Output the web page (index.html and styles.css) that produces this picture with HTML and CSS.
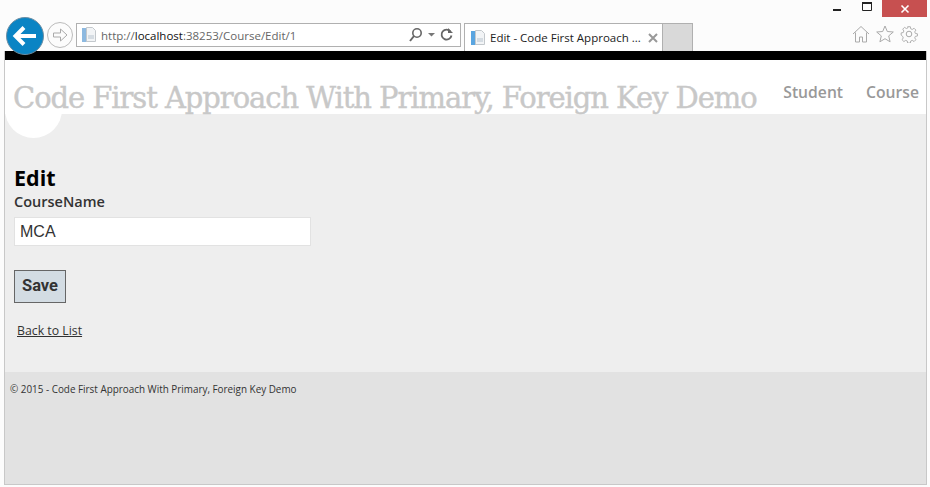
FILE: index.html
```html
<!DOCTYPE html>
<html lang="en">
<head>
<meta charset="utf-8">
<title>Edit - Code First Approach With Primary, Foreign Key Demo</title>
<link rel="stylesheet" href="styles.css">
</head>
<body>
<div class="chrome">
  <div class="caption">
    <span class="cap-btn"><svg width="10" height="10" viewBox="0 0 10 10"><rect x="1" y="7" width="8" height="2" fill="#222"/></svg></span>
    <span class="cap-btn"><svg width="10" height="10" viewBox="0 0 10 10"><path d="M.5 1.5h9v7h-9z" fill="none" stroke="#222"/><rect x="0" y="0" width="10" height="2" fill="#222"/></svg></span>
    <span class="cap-close"><svg width="10" height="10" viewBox="0 0 10 10"><path d="M1.5 1.5l7 7M8.5 1.5l-7 7" stroke="#fff" stroke-width="1.6"/></svg></span>
  </div>
  <div class="toolbar">
    <svg class="back" width="38" height="38" viewBox="0 0 38 38"><circle cx="19" cy="19" r="18.5" fill="#0a84c4" stroke="#6d8ea3"/><path d="M30 19H10M18 10.500l-8.500 8.500 8.500 8.500" fill="none" stroke="#fff" stroke-width="4"/></svg>
    <svg class="forward" width="26" height="26" viewBox="0 0 26 26"><circle cx="13" cy="13" r="12.500" fill="none" stroke="#bbb"/><path d="M6.500 11h7V7l6.500 6-6.500 6v-4h-7z" fill="none" stroke="#aaa"/></svg>
    <div class="address">
      <svg class="page-ico" width="16" height="16" viewBox="0 0 16 16"><rect x="1" y="1" width="5" height="14" fill="#8db9e0"/><path d="M5.500 .5h6l3 3v11h-9z" fill="#f2f4f6" stroke="#c3c8cc"/><path d="M7 9h6M7 11h6" stroke="#b8c4cf"/></svg>
      <span class="url">http://<b class="host">localhost</b>:38253/Course/Edit/1</span>
      <svg class="addr-tools" width="46" height="16" viewBox="0 0 46 16"><circle cx="8" cy="6" r="4.200" fill="none" stroke="#666" stroke-width="1.600"/><path d="M5 9l-4 5" stroke="#666" stroke-width="2"/><path d="M19 6h7l-3.500 3.500z" fill="#777"/><path d="M41.500 4.500a5 5 0 1 0 1 4" fill="none" stroke="#666" stroke-width="1.800"/><path d="M39 1v5h5z" fill="#666"/></svg>
    </div>
    <div class="tab">
      <svg class="page-ico" width="16" height="16" viewBox="0 0 16 16"><rect x="1" y="1" width="5" height="14" fill="#5aa5e0"/><path d="M5.500 .5h6l3 3v11h-9z" fill="#f2f4f6" stroke="#c3c8cc"/><path d="M7 9h6M7 11h6" stroke="#b8c4cf"/></svg>
      <span class="tab-title">Edit - Code First Approach ...</span>
      <svg class="tab-close" width="10" height="10" viewBox="0 0 10 10"><path d="M1 1l8 8M9 1l-8 8" stroke="#999" stroke-width="2"/></svg>
    </div>
    <div class="new-tab"></div>
    <div class="tools">
      <svg width="18" height="18" viewBox="0 0 18 18"><path d="M1 9l8-7.500L17 9M3.500 7.500V17h4v-5h3v5h4V7.500" fill="none" stroke="#aaa"/></svg>
      <svg width="18" height="18" viewBox="0 0 18 18"><path d="M9 1l2.300 5.500 6 .5-4.600 3.900 1.400 5.900L9 13.700l-5.100 3.100 1.400-5.900L.7 7l6-.5z" fill="none" stroke="#aaa"/></svg>
      <svg width="18" height="18" viewBox="0 0 18 18"><circle cx="9" cy="9" r="2.800" fill="none" stroke="#aaa"/><path d="M7.500 1h3l.4 2.300 1.700.7 2-1.300 2 2-1.300 2 .7 1.700 2.300.4v2.400l-2.300.4-.7 1.700 1.300 2-2 2-2-1.300-1.700.7-.4 2.300h-3l-.4-2.300-1.700-.7-2 1.300-2-2 1.300-2-.7-1.700L.4 10.200V7.800l2.300-.4.7-1.700-1.300-2 2-2 2 1.300 1.700-.7z" fill="none" stroke="#aaa" transform="translate(.8 .8) scale(.91)"/></svg>
    </div>
  </div>
</div>
<div class="page">
  <div class="topbar"></div>
  <header class="site-header">
    <div class="logo-disc"></div>
    <p class="site-title">Code First Approach With Primary, Foreign Key Demo</p>
    <nav class="site-nav"><a>Student</a><a>Course</a></nav>
  </header>
  <main class="content">
    <h2 class="heading">Edit</h2>
    <label class="field-label">CourseName</label>
    <input class="field-input" type="text" value="MCA">
    <button class="save">Save</button>
    <a class="back-link">Back to List</a>
  </main>
  <footer class="site-footer">© 2015 - Code First Approach With Primary, Foreign Key Demo</footer>
</div>
</body>
</html>
```
FILE: styles.css
```css
html, body { margin: 0; height: 100%; }
body {
  width: 930px; height: 487px; overflow: hidden;
  background: #fcfcfc;
  font-family: "Open Sans", "Noto Sans", sans-serif;
  display: flex; flex-direction: column;
}
.chrome { height: 51px; flex: none; position: relative; }
.caption { height: 17px; display: flex; justify-content: flex-end; padding-right: 3px; }
.cap-btn { width: 30px; display: flex; align-items: center; justify-content: center; height: 14px; }
.cap-close { width: 45px; height: 17px; background: #c75050; display: flex; align-items: center; justify-content: center; }
.toolbar { display: flex; align-items: flex-start; height: 34px; padding-left: 6px; }
.back { flex: none; }
.forward { margin: 5px 0 0 3px; flex: none; }
.address {
  width: 379px; height: 22px; margin: 6px 0 0 3px; flex: none;
  border: 1px solid #b0b0b0; background: #fff;
  display: flex; align-items: center; padding-left: 4px; box-sizing: content-box;
}
.page-ico { flex: none; }
.url { font-size: 11.500px; color: #666; margin-left: 4px; flex: 1; white-space: nowrap; }
.host { color: #111; font-weight: 400; }
.addr-tools { margin-right: 5px; flex: none; }
.tab {
  width: 199px; height: 28px; margin: 6px 0 0 3px; flex: none; box-sizing: border-box;
  border: 1px solid #b0b0b0; border-bottom: 0; background: #fff;
  display: flex; align-items: center; padding-left: 5px;
}
.tab-title { font-size: 11.500px; color: #222; margin-left: 4px; white-space: nowrap; flex: 1; }
.tab-close { margin-right: 4px; flex: none; }
.new-tab { width: 30px; height: 28px; margin-top: 6px; background: #d9d9d9; border: 1px solid #b0b0b0; border-width: 1px 1px 0 0; box-sizing: border-box; flex: none; }
.tools { margin-left: auto; margin-top: 8px; padding-right: 12px; display: flex; gap: 6px; }
.page {
  flex: 1; margin: 0 3px 2px 4px; min-height: 0;
  border: 1px solid #c8c8c8; border-top: 0; background: #eeeeee;
  display: flex; flex-direction: column; box-sizing: border-box;
}
.topbar { height: 9px; background: #000; flex: none; }
.site-header { height: 54px; background: #fff; display: flex; align-items: flex-start; justify-content: space-between; flex: none; position: relative; }
.logo-disc { position: absolute; left: 0; top: 21px; width: 57px; height: 57px; border-radius: 50%; background: #fff; }
.site-title { position: relative; margin: 18px 0 0 8px; font: 400 29px/40px "DejaVu Serif", serif; color: #c8c8c8; white-space: nowrap; letter-spacing: -1.060px; -webkit-text-stroke: .4px #c8c8c8; }
.site-nav { position: relative; display: flex; gap: 23px; margin: 19px 7px 0 0; font-size: 15.700px; line-height: 26px; font-weight: 600; color: #999; }
.content { flex: 1; padding: 46px 0 0 9px; display: flex; flex-direction: column; align-items: flex-start; }
.heading { margin: 0; font-size: 21.500px; line-height: 36px; font-weight: 700; color: #000; height: 30px; }
.field-label { margin-top: 1px; font-size: 14.500px; line-height: 22px; font-weight: 600; color: #333; }
.field-input { width: 297px; height: 29px; box-sizing: border-box; margin-top: 4px; border: 1px solid #e2e2e2; padding: 0 5px; font: 16px "Liberation Sans", sans-serif; color: #333; background: #fff; }
.save { width: 52px; height: 33px; margin-top: 24px; box-sizing: border-box; border: 1px solid #666; background: #d3dce3; font: 700 16.500px Roboto, sans-serif; color: #333; padding: 0 0 2px; }
.back-link { margin: 19px 0 0 3px; font-size: 12.300px; line-height: 18px; color: #333; text-decoration: underline; }
.site-footer { height: 112px; flex: none; box-sizing: border-box; background: #e2e2e2; padding: 10px 5px; font-size: 9.900px; line-height: 14px; color: #333; }
```
